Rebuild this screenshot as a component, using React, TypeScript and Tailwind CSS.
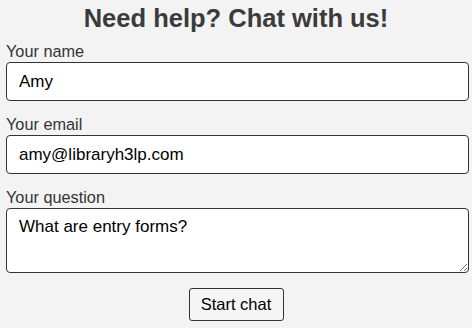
export default function App() {
  return (
    <div className="w-[474px] h-[332px] bg-white">
      <div
        className="w-[472px] h-[328px] bg-[#f3f3f3] px-[6px] flex flex-col"
        style={{ fontFamily: '"Liberation Sans", Arial, sans-serif' }}
      >
        <h1 className="text-center font-bold text-[25.5px] leading-[30px] text-[#3b3b3b] mt-[3px]">
          Need help? Chat with us!
        </h1>

        {/* Name */}
        <label className="block mt-[9px] text-[16.3px] leading-[18px] text-[#333]">Your name</label>
        <input
          readOnly
          value="Amy"
          className="mt-[2px] w-[463px] h-[39px] bg-white border-[1.5px] border-[#333] rounded-[4px] px-[12px] text-[17px] text-black outline-none"
        />

        {/* Email */}
        <label className="block mt-[14px] text-[16.3px] leading-[18px] text-[#333]">Your email</label>
        <input
          readOnly
          value="amy@libraryh3lp.com"
          className="mt-[2px] w-[463px] h-[39px] bg-white border-[1.5px] border-[#333] rounded-[4px] px-[12px] text-[17px] text-black outline-none"
        />

        {/* Question */}
        <label className="block mt-[14px] text-[16.3px] leading-[18px] text-[#333]">Your question</label>
        <textarea
          readOnly
          value="What are entry forms?"
          className="mt-[2px] w-[463px] h-[65px] bg-white border-[1.5px] border-[#333] rounded-[4px] px-[12px] pt-[8px] text-[17px] leading-[20px] text-black outline-none resize-y"
        />

        <div className="flex justify-center mt-[15px]">
          <button className="w-[95px] h-[33px] border border-[#333] rounded-[3px] bg-[#f5f5f5] text-[16.5px] text-black">
            Start chat
          </button>
        </div>
      </div>
    </div>
  )
}
